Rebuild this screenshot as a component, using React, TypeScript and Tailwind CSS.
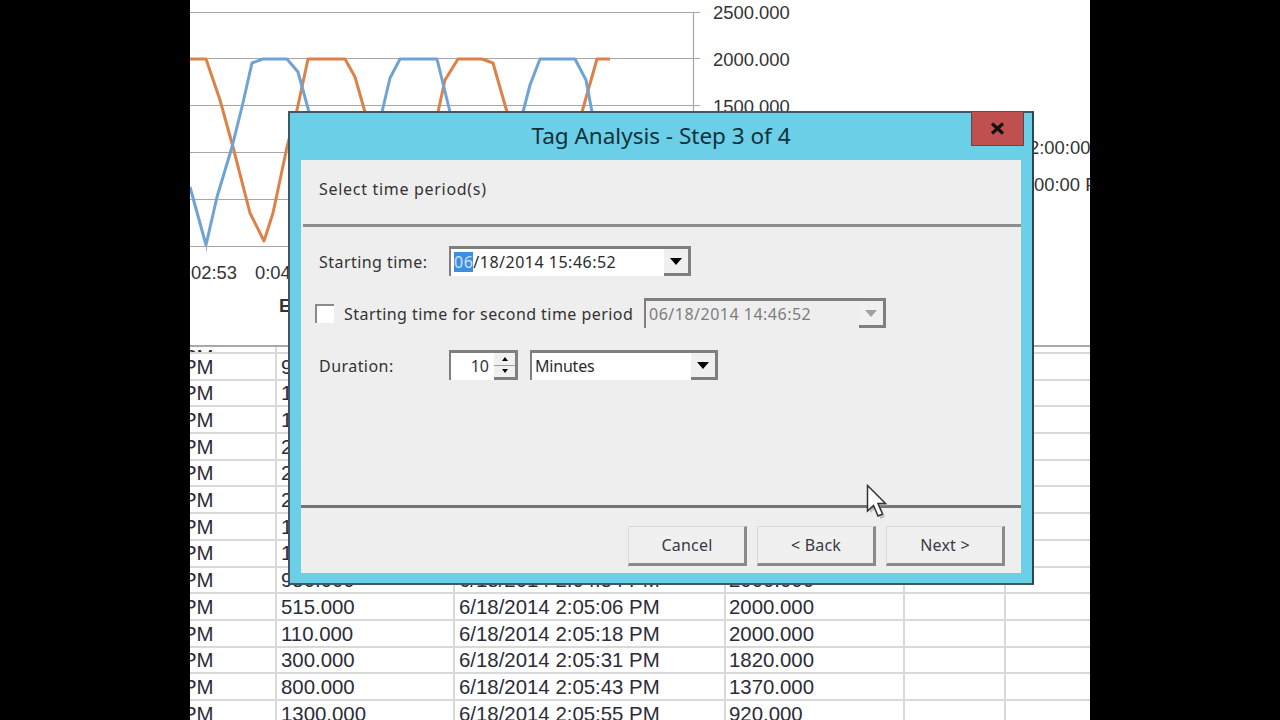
import React from 'react';

const orange = '190,59 206,59 220,100 233,147 250,213 264,241 273,213 287,147 297,110 308,59 345,59 355,77 365,112 380,170 400,200 420,170 438,112 445,80 458,59 482,59 493,63 507,112 530,180 550,190 570,150 582,112 597,59 610,59';
const blue = '190,187 206,245 217,197 232,147 242,107 252,63 263,59 287,59 298,72 309,112 330,180 350,200 370,160 382,112 390,78 400,59 437,59 450,112 470,180 490,190 510,160 523,112 530,85 540,59 575,59 586,80 592,112 610,170';

const gridY = [12.5, 58.5, 105.5, 152.5, 199.5, 246.5];

// rows behind the dialog only show what sticks out on its left side
const rows = [
  ['PM', '9', '', ''],
  ['PM', '1', '', ''],
  ['PM', '1', '', ''],
  ['PM', '2', '', ''],
  ['PM', '2', '', ''],
  ['PM', '2', '', ''],
  ['PM', '1', '', ''],
  ['PM', '1', '', ''],
  ['PM', '950.000', '6/18/2014 2:04:54 PM', '2000.000'],
  ['PM', '515.000', '6/18/2014 2:05:06 PM', '2000.000'],
  ['PM', '110.000', '6/18/2014 2:05:18 PM', '2000.000'],
  ['PM', '300.000', '6/18/2014 2:05:31 PM', '1820.000'],
  ['PM', '800.000', '6/18/2014 2:05:43 PM', '1370.000'],
  ['PM', '1300.000', '6/18/2014 2:05:55 PM', '920.000'],
];

const Arrow = ({ disabled }: { disabled?: boolean }) => (
  <div className={`w-0 h-0 border-x-[6px] border-x-transparent border-t-[7px] ${disabled ? 'border-t-[#a0a0a0]' : 'border-t-black'}`} />
);

const Combo = ({ text, width, disabled, selected, spaced }: { text: string; width: string; disabled?: boolean; selected?: boolean; spaced?: boolean }) => (
  <div className={`${width} h-[30px] flex border-t-[3px] border-l-2 border-[#7f7f7f] ${disabled ? 'bg-[#eeeeee] text-[#7d7d7d]' : 'bg-white text-[#2b2b2b]'}`}>
    <div className={`flex-1 flex items-center pl-[3px] pb-[2px] whitespace-nowrap ${spaced ? 'tracking-[0.5px]' : 'tracking-[-0.2px]'}`}>
      {selected ? <span className="bg-[#3d8fe0] text-[#cfe3f7] h-[20px] leading-[20px]">06</span> : null}
      <span>{text}</span>
    </div>
    <div className="w-[27px] flex items-center justify-center bg-[#f0f0f0] border-r-[3px] border-b-[3px] border-[#7f7f7f]">
      <Arrow disabled={disabled} />
    </div>
  </div>
);

const WizardButton = ({ label }: { label: string }) => (
  <div className="w-[119px] h-[40px] flex items-center justify-center bg-[#f0f0f0] border-t border-l border-[#d8d8d8] border-r-[3px] border-b-[3px] border-r-[#8a8a8a] border-b-[#8a8a8a] text-[#3a3a45] tracking-[0.2px] pb-[1px] pl-[1px]">
    {label}
  </div>
);

const Dialog = () => (
  <div className="absolute left-[98px] top-[111px] w-[746px] h-[474px] bg-[#6bcfe8] border-[2px] border-[#3f5a66] border-r-[#2f4650] flex flex-col font-['Noto_Sans',sans-serif] text-[16px]">
    <div className="relative h-[47px] shrink-0 flex items-center justify-center pb-[1px] text-[22.5px] text-[#12303a]">
      Tag Analysis - Step 3 of 4
      <div className="absolute right-[8px] -top-[1px] w-[53px] h-[34px] bg-[#c0504f] border border-[#5b4a4a] border-t-0 flex items-center justify-center">
        <svg width="15" height="13" viewBox="0 0 15 13">
          <path d="M2 1.5 L13 11.5 M13 1.5 L2 11.5" stroke="#111" strokeWidth="3.2" fill="none" />
        </svg>
      </div>
    </div>

    <div className="mx-[11px] h-[413px] bg-[#eeeeee] flex flex-col text-[#333333]">
      <div className="h-[64px] shrink-0 flex items-center pl-[18px] tracking-[0.7px] pb-[6px]">Select time period(s)</div>
      <div className="h-[3px] shrink-0 bg-[#8c8c8c] ml-[2px]" />

      <div className="flex-1 flex flex-col pl-[18px] pt-[19px]">
        <div className="flex items-center h-[30px]">
          <div className="w-[130px] tracking-[0.45px] pt-[1px]">Starting time:</div>
          <Combo text="/18/2014 15:46:52" width="w-[242px]" selected spaced />
        </div>
        <div className="flex items-center h-[30px] mt-[22px] -ml-[4px]">
          <div className="w-[19px] h-[19px] bg-white border-t-2 border-l-2 border-[#8a8a8a] mr-[10px] shrink-0" />
          <div className="w-[300px] tracking-[0.45px] whitespace-nowrap pt-[1px]">Starting time for second time period</div>
          <Combo text="06/18/2014 14:46:52" width="w-[242px]" disabled spaced />
        </div>
        <div className="flex items-center h-[30px] mt-[22px]">
          <div className="w-[130px] tracking-[0.45px] pt-[1px]">Duration:</div>
          <div className="w-[69px] h-[30px] flex bg-white border-t-[3px] border-l-2 border-[#7f7f7f] mr-[12px]">
            <div className="flex-1 flex items-center justify-end pr-[5px] pb-[2px]">10</div>
            <div className="w-[24px] flex flex-col bg-[#f0f0f0] border-r-[3px] border-b-[3px] border-[#7f7f7f]">
              <div className="flex-1 flex items-center justify-center border-b border-[#9a9a9a]">
                <div className="w-0 h-0 border-x-[3px] border-x-transparent border-b-[4px] border-b-black" />
              </div>
              <div className="flex-1 flex items-center justify-center">
                <div className="w-0 h-0 border-x-[3px] border-x-transparent border-t-[4px] border-t-black" />
              </div>
            </div>
          </div>
          <Combo text="Minutes" width="w-[188px]" />
        </div>
      </div>

      <div className="h-[3px] shrink-0 bg-[#737373]" />
      <div className="h-[65px] shrink-0 flex justify-end gap-[10px] pt-[18px] pr-[16px]">
        <WizardButton label="Cancel" />
        <WizardButton label="< Back" />
        <WizardButton label="Next >" />
      </div>
    </div>
  </div>
);

const Cursor = () => (
  <svg className="absolute left-[676px] top-[484px]" width="26" height="38" viewBox="0 0 26 38">
    <path d="M2 2 L2 27 L8 22 L12.5 33 L17 31 L12.5 20 L20 20 Z" fill="#999" opacity="0.55" transform="translate(2 2)" />
    <path d="M1.5 1.5 L1.5 27 L7.5 21.5 L12 32 L16.5 30 L12 19.5 L19.5 19.5 Z" fill="#fff" stroke="#333" strokeWidth="1.5" />
  </svg>
);

const Row = ({ cells }: { cells: string[] }) => (
  <div className="grid grid-cols-[87px_178px_271px_179px_101px_84px] h-[26.7px] border-b-2 border-[#d9d9d9]">
    <div className="border-r-2 border-[#d9d9d9] overflow-hidden flex items-center pt-[1px]">
      <span className="-ml-[7px]">{cells[0]}</span>
    </div>
    <div className="border-r-2 border-[#d9d9d9] overflow-hidden flex items-center pl-[4px] pt-[1px]">{cells[1]}</div>
    <div className="border-r-2 border-[#d9d9d9] overflow-hidden flex items-center pl-[4px] pt-[1px] whitespace-nowrap">{cells[2]}</div>
    <div className="border-r-2 border-[#d9d9d9] overflow-hidden flex items-center pl-[3px] pt-[1px]">{cells[3]}</div>
    <div className="border-r-2 border-[#d9d9d9]" />
    <div />
  </div>
);

export default function App() {
  return (
    <div className="w-[1280px] h-[720px] bg-black flex justify-center overflow-hidden">
      <div className="relative w-[900px] h-[720px] bg-white overflow-hidden">
        <svg className="block" width="900" height="345" viewBox="190 0 900 345">
          {gridY.map((y) => (
            <line key={y} x1="190" x2="700" y1={y} y2={y} stroke="#a6a6a6" strokeWidth="1.2" />
          ))}
          <line x1="693.5" x2="693.5" y1="12" y2="250" stroke="#a6a6a6" strokeWidth="1.2" />
          <line x1="206.5" x2="206.5" y1="246" y2="251" stroke="#a6a6a6" />
          <polyline points={orange} fill="none" stroke="#dd8149" strokeWidth="3" strokeLinejoin="round" />
          <polyline points={blue} fill="none" stroke="#6fa3d4" strokeWidth="3" strokeLinejoin="round" />
          <g fontFamily="'Liberation Sans', sans-serif" fontSize="18.4" fill="#333">
            <text x="713" y="18.5">2500.000</text>
            <text x="713" y="65.5">2000.000</text>
            <text x="713" y="112.5">1500.000</text>
            <text x="1029" y="153.5">2:00:00</text>
            <text x="1034" y="191">00:00 PM</text>
            <text x="191" y="279">02:53</text>
            <text x="255" y="279">0:04</text>
            <text x="279" y="312" fontWeight="700">E</text>
          </g>
        </svg>

        <div className="border-t-2 border-[#a8a8a8] font-['Liberation_Sans',sans-serif] text-[20.4px] leading-none text-[#2c2c38]">
          <div className="h-[7px] border-b-2 border-[#d9d9d9] overflow-hidden grid grid-cols-[87px_178px_271px_179px_101px_84px]">
            <div className="border-r-2 border-[#d9d9d9] flex items-end">
              <span className="-ml-[7px] -mb-[2px]">PM</span>
            </div>
          </div>
          {rows.map((cells, i) => (
            <Row key={i} cells={cells} />
          ))}
        </div>

        <Dialog />
        <Cursor />
      </div>
    </div>
  );
}
